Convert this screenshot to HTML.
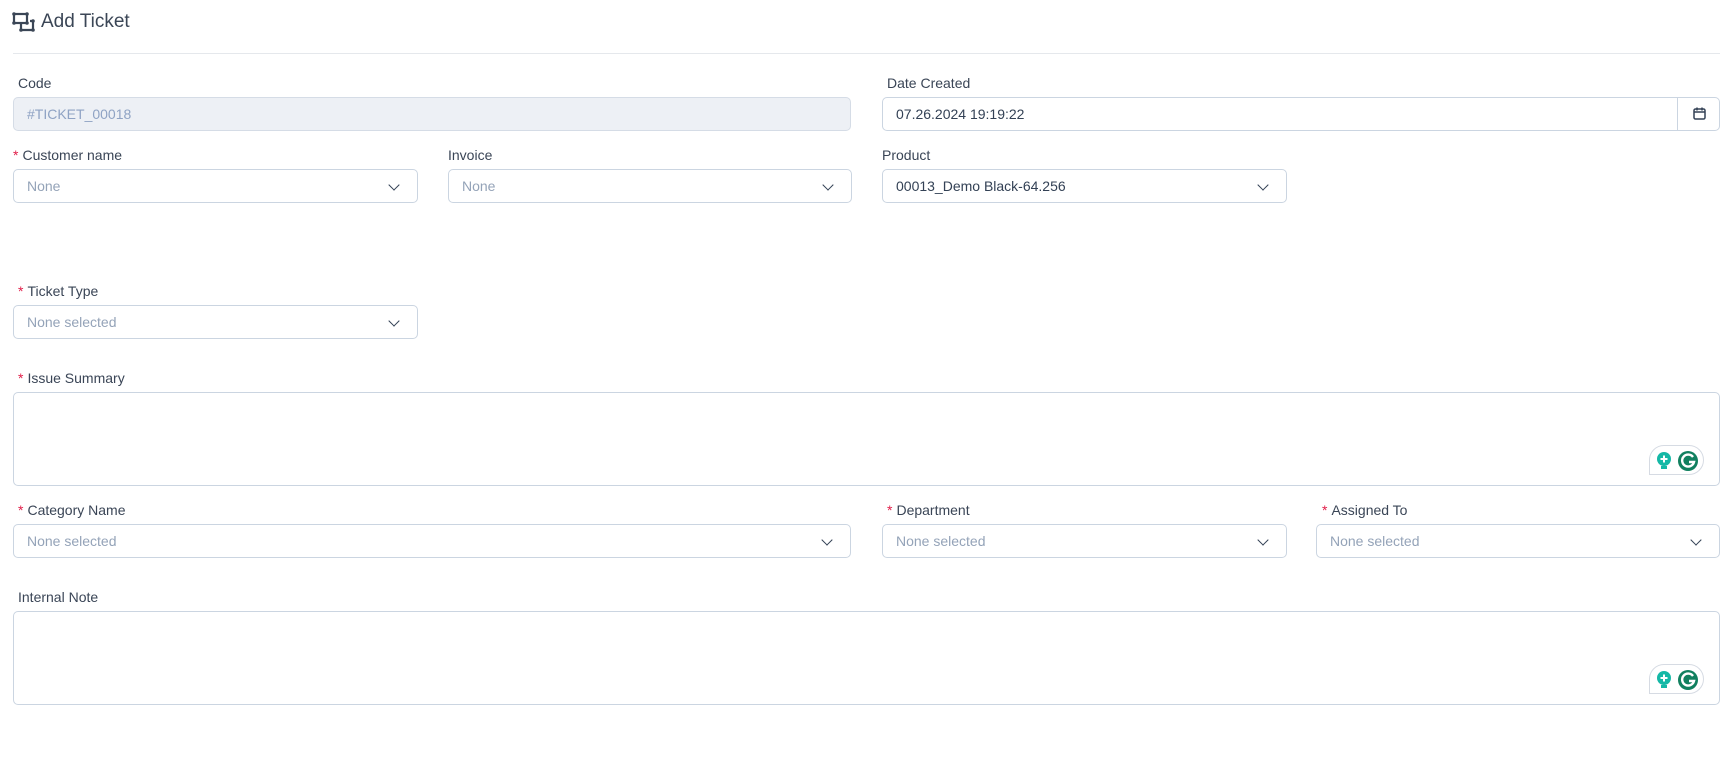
<!DOCTYPE html>
<html><head><meta charset="utf-8"><style>
*{box-sizing:border-box;margin:0;padding:0}
body{width:1736px;height:777px;background:#fff;font-family:"Liberation Sans",sans-serif;color:#334155;position:relative;overflow:hidden}
.a{position:absolute}
.lbl{position:absolute;font-size:14px;color:#3a4556}
.lbl b{color:#e11d48;font-weight:normal;margin-right:4px}
.inp{position:absolute;height:34px;border:1px solid #cbd5e1;border-radius:5px;font-size:14px;color:#94a3b8;padding:0 13px;line-height:32px;background:#fff}
.sel::after{content:"";position:absolute;right:19px;top:11px;width:7px;height:7px;border-right:1.5px solid #334155;border-bottom:1.5px solid #334155;transform:rotate(45deg)}
.ta{position:absolute;border:1px solid #cbd5e1;border-radius:5px;background:#fff}
.g{position:absolute;right:15px;bottom:10px;width:55px;height:30px;border:1px solid #d6dbe3;border-radius:15px 15px 15px 0;background:#fff}
</style></head><body>
<svg class="a" style="left:12px;top:12px" width="24" height="20" viewBox="0 0 24 20" fill="none" stroke="#3b4656" stroke-width="2.2"><rect x="2" y="2" width="13" height="9"/><path d="M9 11v7h12v-9h-3"/><g fill="#3b4656" stroke="none"><circle cx="2" cy="2" r="1.8"/><circle cx="15" cy="2" r="1.8"/><circle cx="2" cy="11" r="1.8"/><circle cx="15" cy="11" r="1.8"/><circle cx="9" cy="18" r="1.8"/><circle cx="21" cy="18" r="1.8"/><circle cx="21" cy="9" r="1.8"/></g></svg>
<div class="a" style="left:41px;top:11px;font-size:19px;color:#3b4656">Add Ticket</div>
<div class="a" style="left:13px;top:53px;width:1707px;height:1px;background:#e5e8ec"></div>

<div class="lbl" style="left:18px;top:75px">Code</div>
<div class="inp" style="left:13px;top:97px;width:838px;background:#edf0f5;border-color:#d5dce6;color:#8fa3c4">#TICKET_00018</div>
<div class="lbl" style="left:887px;top:75px">Date Created</div>
<div class="inp" style="left:882px;top:97px;width:838px;color:#334155">07.26.2024 19:19:22</div>
<div class="a" style="left:1677px;top:97px;width:1px;height:34px;background:#cbd5e1"></div>
<svg class="a" style="left:1693px;top:107px" width="13" height="13" viewBox="0 0 13 13" fill="none" stroke="#334155" stroke-width="1.5"><rect x="1" y="2" width="11" height="10" rx="1.5"/><path d="M1 5h11M4 0.5v3M9 0.5v3"/></svg>

<div class="lbl" style="left:13px;top:147px"><b>*</b>Customer name</div>
<div class="inp sel" style="left:13px;top:169px;width:405px">None</div>
<div class="lbl" style="left:448px;top:147px">Invoice</div>
<div class="inp sel" style="left:448px;top:169px;width:404px">None</div>
<div class="lbl" style="left:882px;top:147px">Product</div>
<div class="inp sel" style="left:882px;top:169px;width:405px;color:#334155">00013_Demo Black-64.256</div>

<div class="lbl" style="left:18px;top:283px"><b>*</b>Ticket Type</div>
<div class="inp sel" style="left:13px;top:305px;width:405px">None selected</div>

<div class="lbl" style="left:18px;top:370px"><b>*</b>Issue Summary</div>
<div class="ta" style="left:13px;top:392px;width:1707px;height:94px"><div class="g"><svg class="a" style="left:6px;top:5px" width="44" height="20" viewBox="0 0 44 20"><circle cx="8" cy="8" r="7" fill="#15b8a6"/><path d="M8 4.5v7M4.5 8h7" stroke="#fff" stroke-width="2"/><rect x="5" y="15" width="6" height="3" fill="#15b8a6"/><circle cx="32" cy="10" r="10" fill="#11805f"/><path d="M37 6a6 6 0 1 0 1 5h-5" stroke="#fff" stroke-width="2.4" fill="none"/></svg></div></div>

<div class="lbl" style="left:18px;top:502px"><b>*</b>Category Name</div>
<div class="inp sel" style="left:13px;top:524px;width:838px">None selected</div>
<div class="lbl" style="left:887px;top:502px"><b>*</b>Department</div>
<div class="inp sel" style="left:882px;top:524px;width:405px">None selected</div>
<div class="lbl" style="left:1322px;top:502px"><b>*</b>Assigned To</div>
<div class="inp sel" style="left:1316px;top:524px;width:404px">None selected</div>

<div class="lbl" style="left:18px;top:589px">Internal Note</div>
<div class="ta" style="left:13px;top:611px;width:1707px;height:94px"><div class="g"><svg class="a" style="left:6px;top:5px" width="44" height="20" viewBox="0 0 44 20"><circle cx="8" cy="8" r="7" fill="#15b8a6"/><path d="M8 4.5v7M4.5 8h7" stroke="#fff" stroke-width="2"/><rect x="5" y="15" width="6" height="3" fill="#15b8a6"/><circle cx="32" cy="10" r="10" fill="#11805f"/><path d="M37 6a6 6 0 1 0 1 5h-5" stroke="#fff" stroke-width="2.4" fill="none"/></svg></div></div>
</body></html>
